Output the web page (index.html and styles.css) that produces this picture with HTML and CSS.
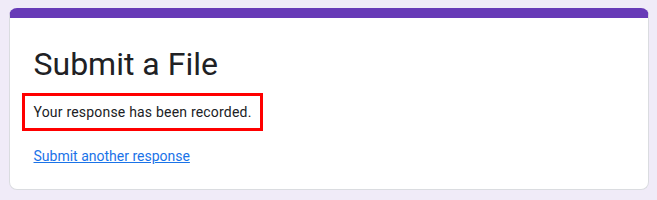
FILE: index.html
```html
<!doctype html>
<html lang="en">
  <head>
    <meta charset="utf-8">
    <title>Submit a File</title>
    <link rel="stylesheet" href="styles.css">
  </head>
  <body>
    <div class="form-card">
      <h1 class="form-title">Submit a File</h1>
      <!-- confirmation message, highlighted -->
      <div class="confirm-box">Your response has been recorded.</div>
      <a class="another-link" href="#">Submit another response</a>
    </div>
  </body>
</html>
```

FILE: styles.css
```css
body {
  margin: 0;
  padding-top: 8px;
  background-color: #f0ebf8;
  font-family: Roboto, "Liberation Sans", Arial, sans-serif;
  color: #202124;
}
.form-card {
  width: 640px;
  box-sizing: border-box;
  margin: 0 auto;
  height: 182px;
  padding: 26px 24px 0 24px;
  background-color: #fff;
  border: 1px solid #dadce0;
  border-top: 10px solid #673ab7;
  border-radius: 8px;
}
.form-title {
  margin: 0;
  font-size: 32px;
  font-weight: 400;
  line-height: 40px;
}
.confirm-box {
  display: inline-block;
  margin: 9px 0 0 -12px;
  padding: 6px 8px 6px 9px;
  border: 3px solid #f00;
  font-size: 14px;
  line-height: 20px;
  letter-spacing: 0.2px;
}
.another-link {
  display: block;
  margin-top: 15px;
  font-size: 14px;
  line-height: 20px;
  color: #1a73e8;
}
```
